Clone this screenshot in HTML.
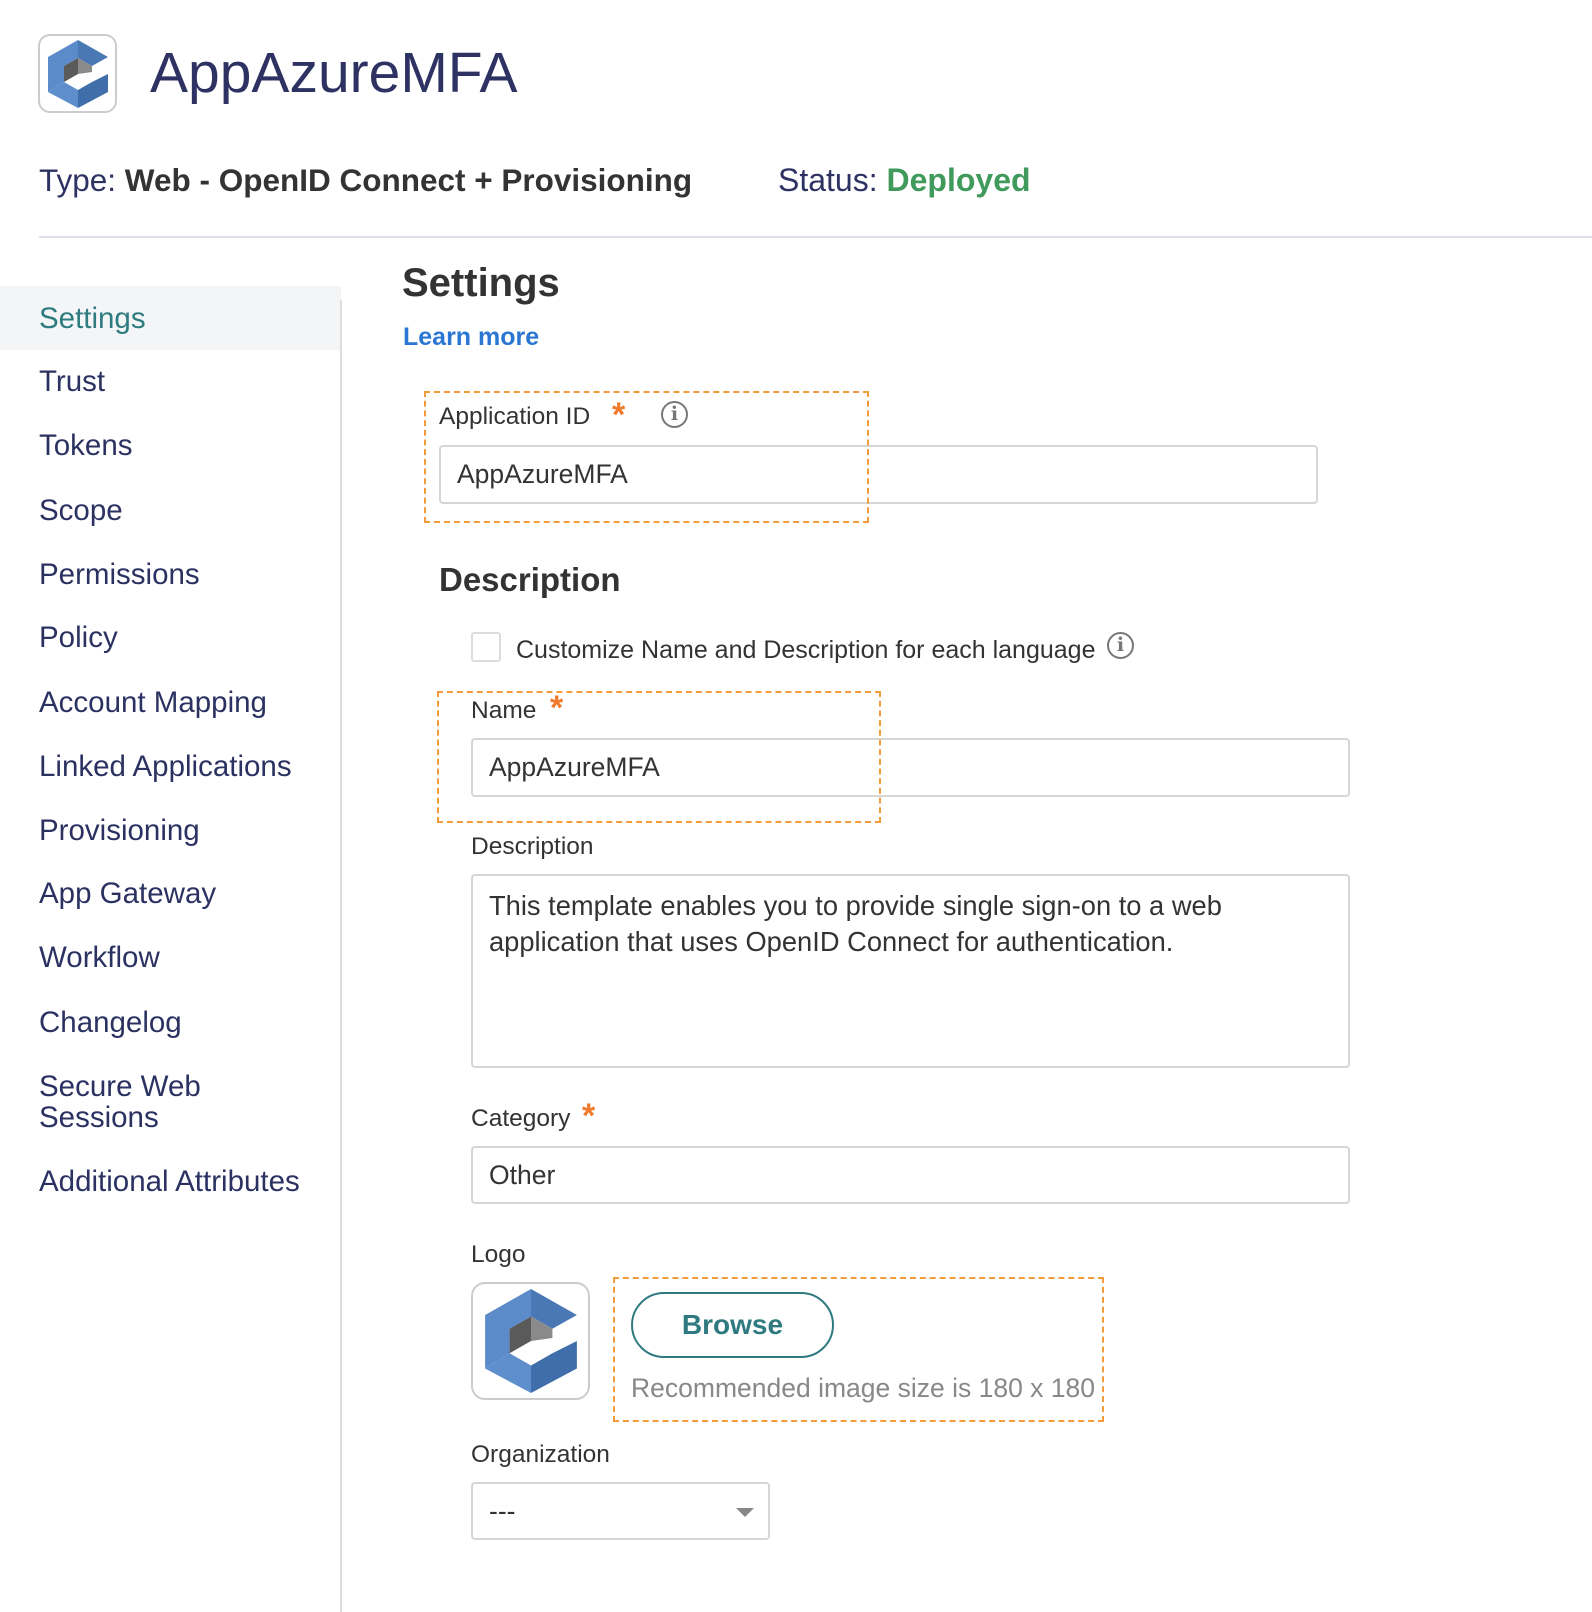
<!DOCTYPE html>
<html><head><meta charset="utf-8"><style>
*{box-sizing:border-box;margin:0;padding:0}
body{width:1592px;height:1612px;background:#fff;font-family:"Liberation Sans","DejaVu Sans",sans-serif;position:relative;overflow:hidden;color:#333}
.a{position:absolute;white-space:nowrap}
.side{color:#2b3262;font-size:29.5px;left:39px;line-height:32px}
.lbl{font-size:24.5px;color:#333;line-height:28px}
.inp{position:absolute;border:2px solid #d6d6d6;border-radius:4px;background:#fff}
.inp span{position:absolute;left:16px;font-size:26.5px;color:#333}
.ob{position:absolute;border:2px dashed #f29d3a;z-index:5}
.star{color:#f07a2a;font-size:34px;font-weight:bold;line-height:34px}
.info{position:absolute;width:27px;height:27px;border:2px solid #777;border-radius:50%;color:#777;font-size:19px;font-weight:bold;text-align:center;line-height:23px;font-family:"DejaVu Serif",serif}
</style></head><body>
<svg width="0" height="0" style="position:absolute"><defs><g id="lg">
<polygon points="4,19 34,2 34,20 20,28 20,44 4,54" fill="#5b8cc9"/>
<polygon points="34,2 64,19 48,28 34,20" fill="#4a78b5"/>
<polygon points="20,28 34,20 34,36 20,44" fill="#5a5a5a"/>
<polygon points="34,20 48,28 48,34 34,36" fill="#8a8a8a"/>
<polygon points="4,54 20,44 34,52 34,70" fill="#5e8fcc"/>
<polygon points="34,52 48,44 64,36 64,54 34,70" fill="#3f6eaa"/>
</g></defs></svg>
<div class="a" style="left:38px;top:34px;width:79px;height:79px;border:2px solid #ccc;border-radius:12px;background:#fff"></div>
<svg class="a" style="left:44px;top:38px" width="68" height="72" viewBox="0 0 68 72"><use href="#lg"/></svg>
<div class="a" style="left:150px;top:38px;font-size:57px;color:#2d3262;line-height:70px">AppAzureMFA</div>
<div class="a" style="left:39px;top:160px;font-size:31.5px;line-height:40px;color:#2d3262">Type: <b style="color:#333">Web - OpenID Connect + Provisioning</b></div>
<div class="a" style="left:778px;top:160px;font-size:32px;line-height:40px;color:#2d3262">Status: <b style="color:#3f9a5c">Deployed</b></div>
<div class="a" style="left:39px;top:236px;width:1553px;height:2px;background:#dde0ea"></div>
<div class="a" style="left:0;top:286px;width:341px;height:64px;background:#f4f5f7"></div>
<div class="a" style="left:340px;top:300px;width:2px;height:1312px;background:#ddd"></div>
<div class="a side" style="top:303px;color:#2e7b80">Settings</div>
<div class="a side" style="top:366px">Trust</div>
<div class="a side" style="top:430px">Tokens</div>
<div class="a side" style="top:495px">Scope</div>
<div class="a side" style="top:559px">Permissions</div>
<div class="a side" style="top:622px">Policy</div>
<div class="a side" style="top:687px">Account Mapping</div>
<div class="a side" style="top:751px">Linked Applications</div>
<div class="a side" style="top:815px">Provisioning</div>
<div class="a side" style="top:878px">App Gateway</div>
<div class="a side" style="top:942px">Workflow</div>
<div class="a side" style="top:1007px">Changelog</div>
<div class="a side" style="top:1071px">Secure Web</div>
<div class="a side" style="top:1102px">Sessions</div>
<div class="a side" style="top:1166px">Additional Attributes</div>
<div class="a" style="left:402px;top:258px;font-size:40px;font-weight:bold;color:#333;line-height:50px">Settings</div>
<div class="a" style="left:403px;top:322px;font-size:25px;font-weight:bold;color:#2a76d2;line-height:30px">Learn more</div>
<div class="ob" style="left:424px;top:391px;width:445px;height:132px"></div>
<div class="a lbl" style="left:439px;top:403px">Application ID</div>
<div class="a star" style="left:612px;top:398px">*</div>
<div class="info" style="left:661px;top:401px">i</div>
<div class="inp" style="left:439px;top:445px;width:879px;height:59px"><span style="top:12px">AppAzureMFA</span></div>
<div class="a" style="left:439px;top:560px;font-size:33px;font-weight:bold;color:#333;line-height:40px">Description</div>
<div class="a" style="left:471px;top:632px;width:30px;height:30px;border:2px solid #ddd;border-radius:3px"></div>
<div class="a lbl" style="left:516px;top:636px;font-size:25px">Customize Name and Description for each language</div>
<div class="info" style="left:1107px;top:632px">i</div>
<div class="ob" style="left:437px;top:691px;width:444px;height:132px"></div>
<div class="a lbl" style="left:471px;top:697px">Name</div>
<div class="a star" style="left:550px;top:691px">*</div>
<div class="inp" style="left:471px;top:738px;width:879px;height:59px"><span style="top:12px">AppAzureMFA</span></div>
<div class="a lbl" style="left:471px;top:833px">Description</div>
<div class="inp" style="left:471px;top:874px;width:879px;height:194px"><span style="top:12px;line-height:36px;font-size:27.3px">This template enables you to provide single sign-on to a web<br>application that uses OpenID Connect for authentication.</span></div>
<div class="a lbl" style="left:471px;top:1105px">Category</div>
<div class="a star" style="left:582px;top:1099px">*</div>
<div class="inp" style="left:471px;top:1146px;width:879px;height:58px"><span style="top:12px">Other</span></div>
<div class="a lbl" style="left:471px;top:1241px">Logo</div>
<div class="a" style="left:471px;top:1282px;width:119px;height:118px;border:2px solid #ccc;border-radius:14px"></div>
<svg class="a" style="left:479px;top:1285px" width="104" height="112" viewBox="0 0 68 72"><use href="#lg"/></svg>
<div class="ob" style="left:613px;top:1277px;width:491px;height:145px"></div>
<div class="a" style="left:631px;top:1292px;width:203px;height:66px;border:2px solid #2f7a80;border-radius:33px;text-align:center;line-height:62px;font-size:28px;font-weight:bold;color:#2f7a80">Browse</div>
<div class="a" style="left:631px;top:1372px;font-size:26.5px;color:#888;line-height:32px">Recommended image size is 180 x 180</div>
<div class="a lbl" style="left:471px;top:1441px">Organization</div>
<div class="inp" style="left:471px;top:1482px;width:299px;height:58px"><span style="top:12px">---</span>
<div style="position:absolute;right:14px;top:24px;border-left:9px solid transparent;border-right:9px solid transparent;border-top:9px solid #888"></div></div>
</body></html>
